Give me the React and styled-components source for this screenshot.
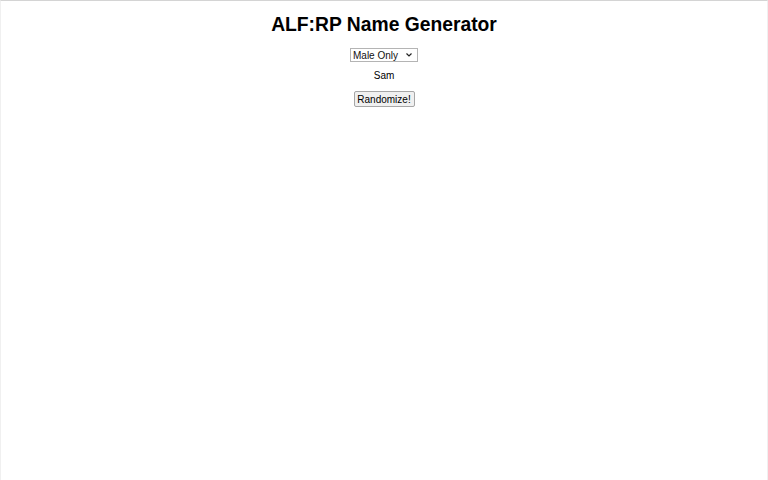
import React, { useState } from 'react';
import styled, { createGlobalStyle } from 'styled-components';

const MALE = ['Sam', 'Jack', 'Tom', 'Ben', 'Max'];
const FEMALE = ['Ann', 'Kate', 'Lucy', 'Mia', 'Eve'];

const GlobalStyle = createGlobalStyle`
  html, body {
    margin: 0;
    padding: 0;
    background: #fff;
  }
  body {
    font-family: "Liberation Sans", Arial, sans-serif;
    font-size: 10px;
    color: #000;
  }
`;

const Page = styled.div`
  box-sizing: border-box;
  min-height: 480px;
  border-top: 1px solid #d4d4d4;
  border-left: 1px solid #f0f0f0;
  border-right: 1px solid #f0f0f0;
  display: flex;
  flex-direction: column;
  align-items: center;
  padding-top: 12px;
`;

const Title = styled.h1`
  margin: 0 0 12px;
  font-size: 19.3px;
  font-weight: bold;
  line-height: 23px;
`;

const SelectWrap = styled.span`
  position: relative;
  display: inline-block;
  width: 68px;
  height: 14px;
`;

const Select = styled.select`
  appearance: none;
  box-sizing: border-box;
  font-family: "Liberation Sans", Arial, sans-serif;
  font-size: 10px;
  width: 68px;
  height: 14px;
  margin: 0;
  padding: 0 0 0 2px;
  border: 1px solid #b4b4b4;
  border-radius: 0;
  background: #fff;
  color: #111;
  outline: none;
`;

const Chevron = styled.svg`
  position: absolute;
  right: 6px;
  top: 5px;
  pointer-events: none;
`;

const Name = styled.p`
  margin: 8px 0 9px;
  font-size: 10px;
  line-height: 12px;
`;

const Button = styled.button`
  box-sizing: border-box;
  font-family: "Liberation Sans", Arial, sans-serif;
  font-size: 10px;
  width: 61px;
  height: 16px;
  padding: 0;
  border: 1px solid #a6a6a6;
  border-radius: 2px;
  background: #f0f0f0;
  color: #000;
`;

export default function App() {
  const [mode, setMode] = useState('male');
  const [name, setName] = useState('Sam');

  const randomize = () => {
    const pool =
      mode === 'male' ? MALE : mode === 'female' ? FEMALE : [...MALE, ...FEMALE];
    setName(pool[Math.floor(Math.random() * pool.length)]);
  };

  return (
    <>
      <GlobalStyle />
      <Page>
        <Title>ALF:RP Name Generator</Title>
        <SelectWrap>
          <Select value={mode} onChange={e => setMode(e.target.value)}>
            <option value="male">Male Only</option>
            <option value="female">Female Only</option>
            <option value="both">Both</option>
          </Select>
          <Chevron width="6" height="4" viewBox="0 0 6 4">
            <path d="M0.5 0.5 L3 3 L5.5 0.5" fill="none" stroke="#222" strokeWidth="1.2" />
          </Chevron>
        </SelectWrap>
        <Name>{name}</Name>
        <Button onClick={randomize}>Randomize!</Button>
      </Page>
    </>
  );
}
